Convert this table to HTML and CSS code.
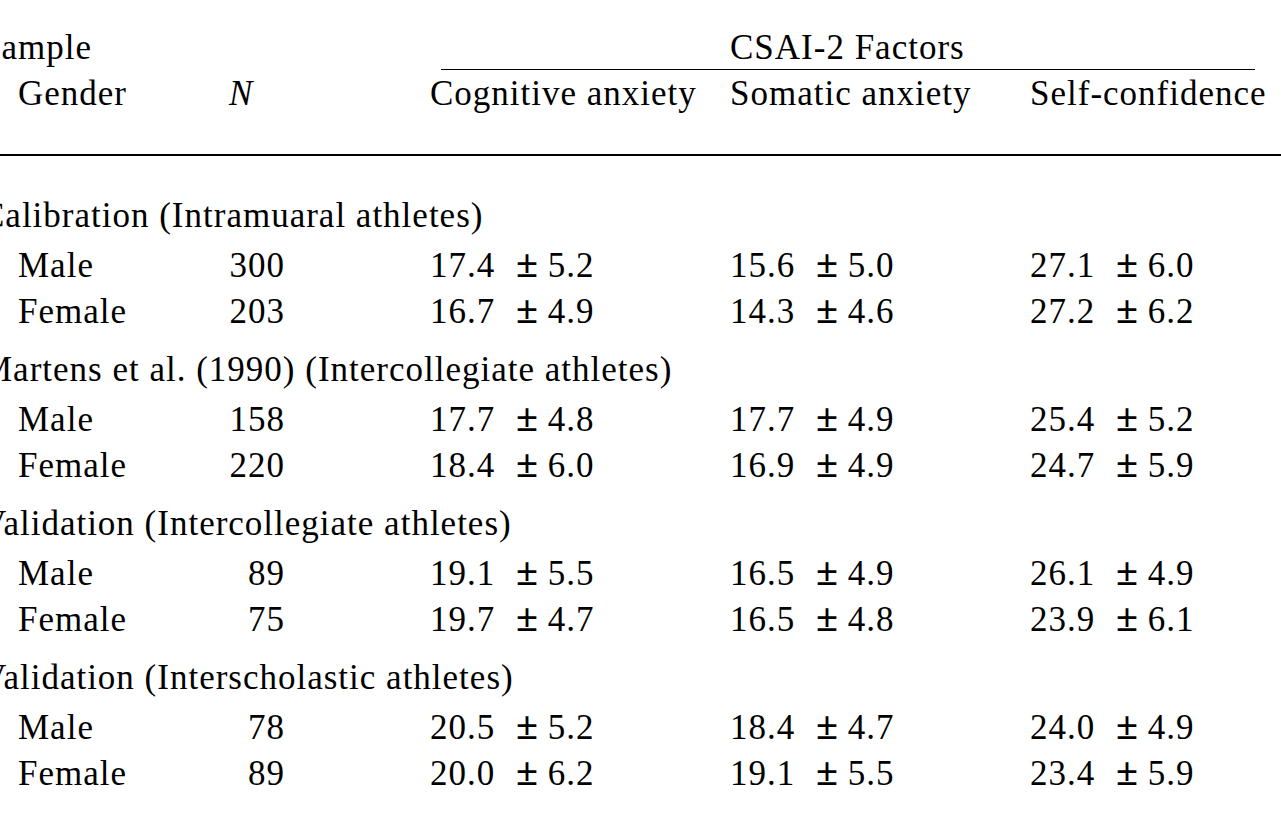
FILE: index.html
```html
<!DOCTYPE html>
<html lang="en">
<head>
<meta charset="utf-8">
<title>CSAI-2 Factors</title>
<link rel="stylesheet" href="styles.css">
</head>
<body>
<div class="table">
  <div class="head">
    <div class="row row-top">
      <div class="sample">Sample</div>
      <div class="factors">CSAI-2 Factors</div>
    </div>
    <div class="row row-cols">
      <div>Gender</div>
      <div class="n-head">N</div>
      <div>Cognitive anxiety</div>
      <div>Somatic anxiety</div>
      <div>Self-confidence</div>
    </div>
  </div>
  <div class="body">
    <div class="group">
      <div class="glabel">Calibration (Intramuaral athletes)</div>
      <div class="row"><div>Male</div><div><span class="num">300</span></div><div><span class="mean">17.4</span><span class="pm">±</span> 5.2</div><div><span class="mean">15.6</span><span class="pm">±</span> 5.0</div><div><span class="mean">27.1</span><span class="pm">±</span> 6.0</div></div>
      <div class="row"><div>Female</div><div><span class="num">203</span></div><div><span class="mean">16.7</span><span class="pm">±</span> 4.9</div><div><span class="mean">14.3</span><span class="pm">±</span> 4.6</div><div><span class="mean">27.2</span><span class="pm">±</span> 6.2</div></div>
    </div>
    <div class="group">
      <div class="glabel">Martens et al. (1990) (Intercollegiate athletes)</div>
      <div class="row"><div>Male</div><div><span class="num">158</span></div><div><span class="mean">17.7</span><span class="pm">±</span> 4.8</div><div><span class="mean">17.7</span><span class="pm">±</span> 4.9</div><div><span class="mean">25.4</span><span class="pm">±</span> 5.2</div></div>
      <div class="row"><div>Female</div><div><span class="num">220</span></div><div><span class="mean">18.4</span><span class="pm">±</span> 6.0</div><div><span class="mean">16.9</span><span class="pm">±</span> 4.9</div><div><span class="mean">24.7</span><span class="pm">±</span> 5.9</div></div>
    </div>
    <div class="group">
      <div class="glabel">Validation (Intercollegiate athletes)</div>
      <div class="row"><div>Male</div><div><span class="num">89</span></div><div><span class="mean">19.1</span><span class="pm">±</span> 5.5</div><div><span class="mean">16.5</span><span class="pm">±</span> 4.9</div><div><span class="mean">26.1</span><span class="pm">±</span> 4.9</div></div>
      <div class="row"><div>Female</div><div><span class="num">75</span></div><div><span class="mean">19.7</span><span class="pm">±</span> 4.7</div><div><span class="mean">16.5</span><span class="pm">±</span> 4.8</div><div><span class="mean">23.9</span><span class="pm">±</span> 6.1</div></div>
    </div>
    <div class="group">
      <div class="glabel">Validation (Interscholastic athletes)</div>
      <div class="row"><div>Male</div><div><span class="num">78</span></div><div><span class="mean">20.5</span><span class="pm">±</span> 5.2</div><div><span class="mean">18.4</span><span class="pm">±</span> 4.7</div><div><span class="mean">24.0</span><span class="pm">±</span> 4.9</div></div>
      <div class="row"><div>Female</div><div><span class="num">89</span></div><div><span class="mean">20.0</span><span class="pm">±</span> 6.2</div><div><span class="mean">19.1</span><span class="pm">±</span> 5.5</div><div><span class="mean">23.4</span><span class="pm">±</span> 5.9</div></div>
    </div>
  </div>
</div>
</body>
</html>
```

FILE: styles.css
```css
html, body {
  margin: 0;
  padding: 0;
  background: #ffffff;
}

body {
  font-family: "Liberation Serif", "Times New Roman", serif;
  font-size: 35px;
  line-height: 46px;
  letter-spacing: 1px;
  color: #000000;
  overflow: hidden;
}

.table {
  padding-top: 27px;
  width: 1281px;
}

.row {
  display: grid;
  grid-template-columns: 211px 201px 300px 300px 1fr;
  padding-left: 18px;
  white-space: nowrap;
}

.row-top {
  line-height: 42px;
}

.row-cols {
  padding-top: 1px;
}

.head {
  border-bottom: 2px solid #000000;
  padding-bottom: 37px;
}

.sample {
  margin-left: -37px;
}

.factors {
  grid-column: 3 / 6;
  margin-left: 11px;
  margin-right: 26px;
  padding-left: 289px;
  border-bottom: 1px solid #000000;
}

.n-head {
  font-style: italic;
}

.body {
  padding-top: 25px;
}

.group {
  padding-top: 12px;
}

.glabel {
  margin-left: -19px;
  padding-bottom: 4px;
  white-space: nowrap;
}

.num {
  display: inline-block;
  width: 56px;
  text-align: right;
}

.mean {
  display: inline-block;
  width: 86px;
}

.pm {
  font-size: 40px;
  font-weight: bold;
  line-height: 1;
  letter-spacing: 0;
}
```
